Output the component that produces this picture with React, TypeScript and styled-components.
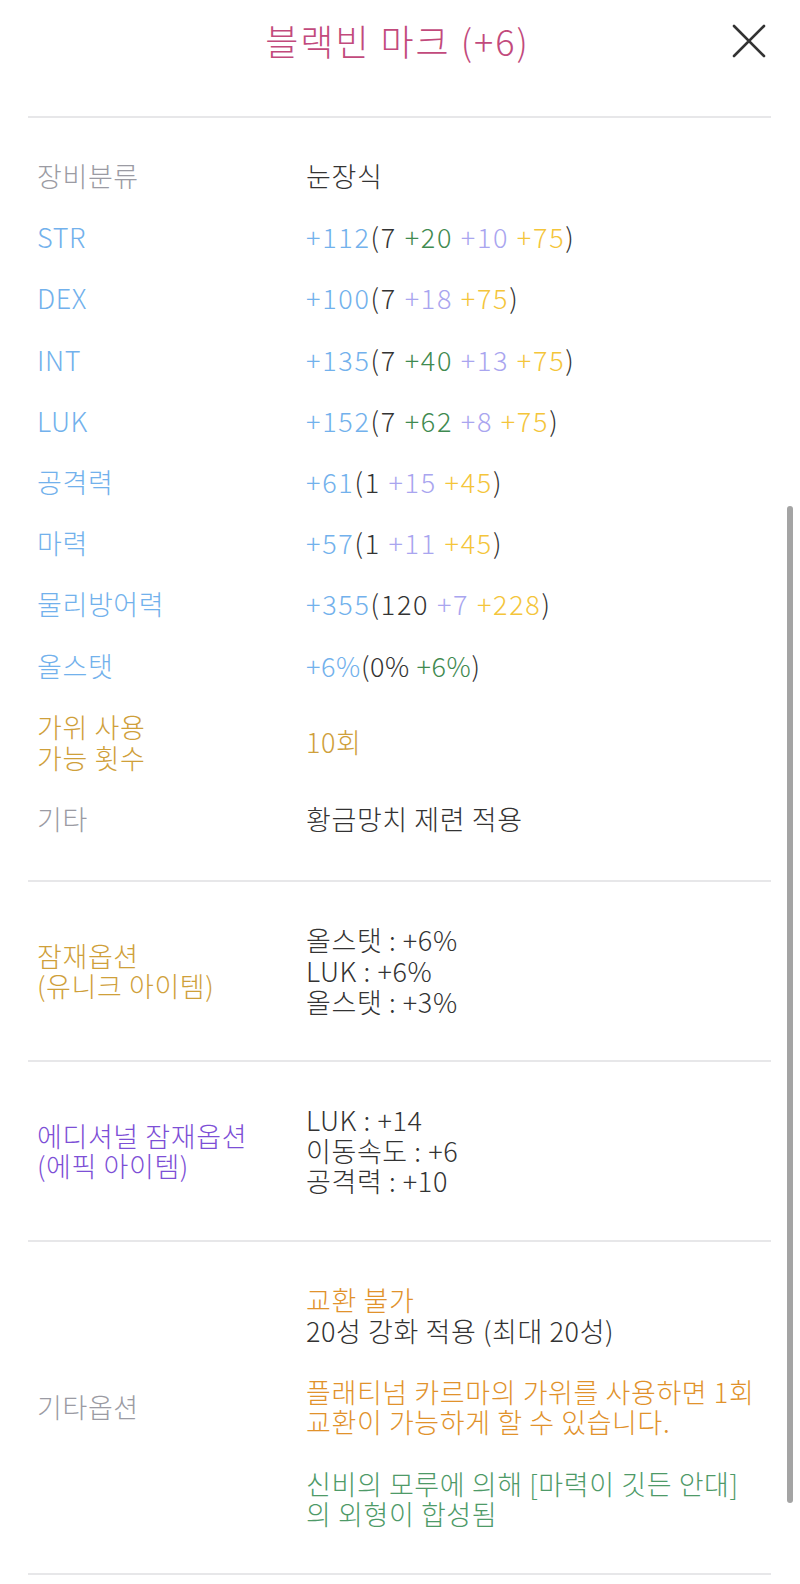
import styled, { createGlobalStyle } from "styled-components";
import { Fragment, ReactNode } from "react";

const colors = {
  grey: "#9b9ba3",
  blue: "#72b1ec",
  dark: "#333333",
  green: "#3f8a50",
  lavender: "#a9a5ef",
  yellow: "#f4c53a",
  gold: "#cfa03a",
  purple: "#7d4fd6",
  orange: "#e1922b",
  moss: "#4e9a68",
};

type Tone = keyof typeof colors;

type StatRow = {
  label: ReactNode;
  tone: Tone;
  value: ReactNode;
  numeric?: boolean;
};

const P = ({ t, children }: { t: Tone; children: ReactNode }) => (
  <Part tone={t}>{children}</Part>
);

const rows: StatRow[] = [
  { label: "장비분류", tone: "grey", value: <P t="dark">눈장식</P> },
  {
    label: "STR",
    tone: "blue",
    numeric: true,
    value: (
      <>
        <P t="blue">+112</P>
        <P t="dark">(7 </P>
        <P t="green">+20 </P>
        <P t="lavender">+10 </P>
        <P t="yellow">+75</P>
        <P t="dark">)</P>
      </>
    ),
  },
  {
    label: "DEX",
    tone: "blue",
    numeric: true,
    value: (
      <>
        <P t="blue">+100</P>
        <P t="dark">(7 </P>
        <P t="lavender">+18 </P>
        <P t="yellow">+75</P>
        <P t="dark">)</P>
      </>
    ),
  },
  {
    label: "INT",
    tone: "blue",
    numeric: true,
    value: (
      <>
        <P t="blue">+135</P>
        <P t="dark">(7 </P>
        <P t="green">+40 </P>
        <P t="lavender">+13 </P>
        <P t="yellow">+75</P>
        <P t="dark">)</P>
      </>
    ),
  },
  {
    label: "LUK",
    tone: "blue",
    numeric: true,
    value: (
      <>
        <P t="blue">+152</P>
        <P t="dark">(7 </P>
        <P t="green">+62 </P>
        <P t="lavender">+8 </P>
        <P t="yellow">+75</P>
        <P t="dark">)</P>
      </>
    ),
  },
  {
    label: "공격력",
    tone: "blue",
    numeric: true,
    value: (
      <>
        <P t="blue">+61</P>
        <P t="dark">(1 </P>
        <P t="lavender">+15 </P>
        <P t="yellow">+45</P>
        <P t="dark">)</P>
      </>
    ),
  },
  {
    label: "마력",
    tone: "blue",
    numeric: true,
    value: (
      <>
        <P t="blue">+57</P>
        <P t="dark">(1 </P>
        <P t="lavender">+11 </P>
        <P t="yellow">+45</P>
        <P t="dark">)</P>
      </>
    ),
  },
  {
    label: "물리방어력",
    tone: "blue",
    numeric: true,
    value: (
      <>
        <P t="blue">+355</P>
        <P t="dark">(120 </P>
        <P t="lavender">+7 </P>
        <P t="yellow">+228</P>
        <P t="dark">)</P>
      </>
    ),
  },
  {
    label: "올스탯",
    tone: "blue",
    value: (
      <>
        <P t="blue">+6%</P>
        <P t="dark">(0% </P>
        <P t="green">+6%</P>
        <P t="dark">)</P>
      </>
    ),
  },
  {
    label: (
      <>
        가위 사용
        <br />
        가능 횟수
      </>
    ),
    tone: "gold",
    value: <P t="gold">10회</P>,
  },
  { label: "기타", tone: "grey", value: <P t="dark">황금망치 제련 적용</P> },
];

function App() {
  return (
    <>
      <GlobalStyle />
      <Sheet>
        <Header>
          <span />
          <Title>블랙빈 마크 (+6)</Title>
          <CloseButton aria-label="닫기">
            <svg width="36" height="36" viewBox="0 0 36 36">
              <path
                d="M3 3 L33 33 M33 3 L3 33"
                stroke="#333"
                strokeWidth="2.6"
                strokeLinecap="round"
              />
            </svg>
          </CloseButton>
        </Header>

        <Content>
          <Divider />
          <StatSection>
            {rows.map((row, idx) => (
              <Fragment key={idx}>
                <StatLabel tone={row.tone}>{row.label}</StatLabel>
                <StatValue numeric={row.numeric}>{row.value}</StatValue>
              </Fragment>
            ))}
          </StatSection>
          <Divider />

          <OptionSection>
            <OptionLabel tone="gold">
              잠재옵션
              <br />
              (유니크 아이템)
            </OptionLabel>
            <OptionLines>
              <div>올스탯 : +6%</div>
              <div>LUK : +6%</div>
              <div>올스탯 : +3%</div>
            </OptionLines>
          </OptionSection>
          <Divider />

          <OptionSection>
            <OptionLabel tone="purple">
              에디셔널 잠재옵션
              <br />
              (에픽 아이템)
            </OptionLabel>
            <OptionLines>
              <div>LUK : +14</div>
              <div>이동속도 : +6</div>
              <div>공격력 : +10</div>
            </OptionLines>
          </OptionSection>
          <Divider />

          <OptionSection>
            <OptionLabel tone="grey">기타옵션</OptionLabel>
            <OptionLines>
              <Paragraph>
                <Part tone="orange">교환 불가</Part>
                <br />
                20성 강화 적용 (최대 20성)
              </Paragraph>
              <Paragraph tone="orange">
                플래티넘 카르마의 가위를 사용하면 1회
                <br />
                교환이 가능하게 할 수 있습니다.
              </Paragraph>
              <Paragraph tone="moss">
                신비의 모루에 의해 [마력이 깃든 안대]
                <br />의 외형이 합성됨
              </Paragraph>
            </OptionLines>
          </OptionSection>
          <Divider />
        </Content>
      </Sheet>
      <ScrollThumb />
    </>
  );
}

const GlobalStyle = createGlobalStyle`
  html, body {
    margin: 0;
    padding: 0;
    background: #ffffff;
  }
  body {
    font-family: "Noto Sans CJK KR", "Noto Sans", sans-serif;
    color: #333;
    -webkit-font-smoothing: antialiased;
  }
`;

const Sheet = styled.div`
  width: 800px;
  min-height: 1584px;
  background: #fff;
`;

const Header = styled.header`
  height: 80px;
  display: grid;
  grid-template-columns: 1fr auto 1fr;
  align-items: center;
  padding: 0 33px 0 28px;
`;

const Title = styled.h1`
  margin: 0;
  font-size: 36px;
  line-height: 44px;
  font-weight: 300;
  color: #c24a7c;
  letter-spacing: 2px;
`;

const CloseButton = styled.button`
  justify-self: end;
  width: 36px;
  height: 36px;
  padding: 0;
  border: 0;
  background: none;
  display: flex;
  align-items: center;
  justify-content: center;
  margin-top: 1px;
`;

const Content = styled.main`
  padding: 36px 29px 0 28px;
`;

const Divider = styled.hr`
  margin: 0;
  height: 2px;
  border: 0;
  background: #e7e7e9;
`;

const StatSection = styled.section`
  display: grid;
  grid-template-columns: 278px 1fr;
  align-items: center;
  padding: 27px 0 31px;
  font-size: 27px;
  line-height: 31.2px;
  font-weight: 300;
  letter-spacing: 0.6px;
`;

const StatLabel = styled.div<{ tone: Tone }>`
  padding: 15px 0 15px 9px;
  color: ${(p) => colors[p.tone]};
`;

const StatValue = styled.div<{ numeric?: boolean }>`
  padding: 15px 0;
  white-space: nowrap;
  letter-spacing: ${(p) => (p.numeric ? "1.7px" : "0.6px")};
`;

const Part = styled.span<{ tone: Tone }>`
  color: ${(p) => colors[p.tone]};
`;

const OptionSection = styled.section`
  display: grid;
  grid-template-columns: 278px 1fr;
  align-items: center;
  padding: 43px 0;
  font-size: 27px;
  line-height: 30.6px;
  font-weight: 300;
  letter-spacing: 0.6px;
`;

const OptionLabel = styled.div<{ tone: Tone }>`
  padding-left: 9px;
  color: ${(p) => colors[p.tone]};
`;

const OptionLines = styled.div`
  color: ${colors.dark};
  white-space: nowrap;
`;

const Paragraph = styled.p<{ tone?: Tone }>`
  margin: 0;
  color: ${(p) => (p.tone ? colors[p.tone] : colors.dark)};

  & + & {
    margin-top: 30.6px;
  }
`;

const ScrollThumb = styled.div`
  position: fixed;
  top: 506px;
  right: 7px;
  width: 6px;
  height: 997px;
  border-radius: 3px;
  background: #a4a4a4;
`;

export default App;
